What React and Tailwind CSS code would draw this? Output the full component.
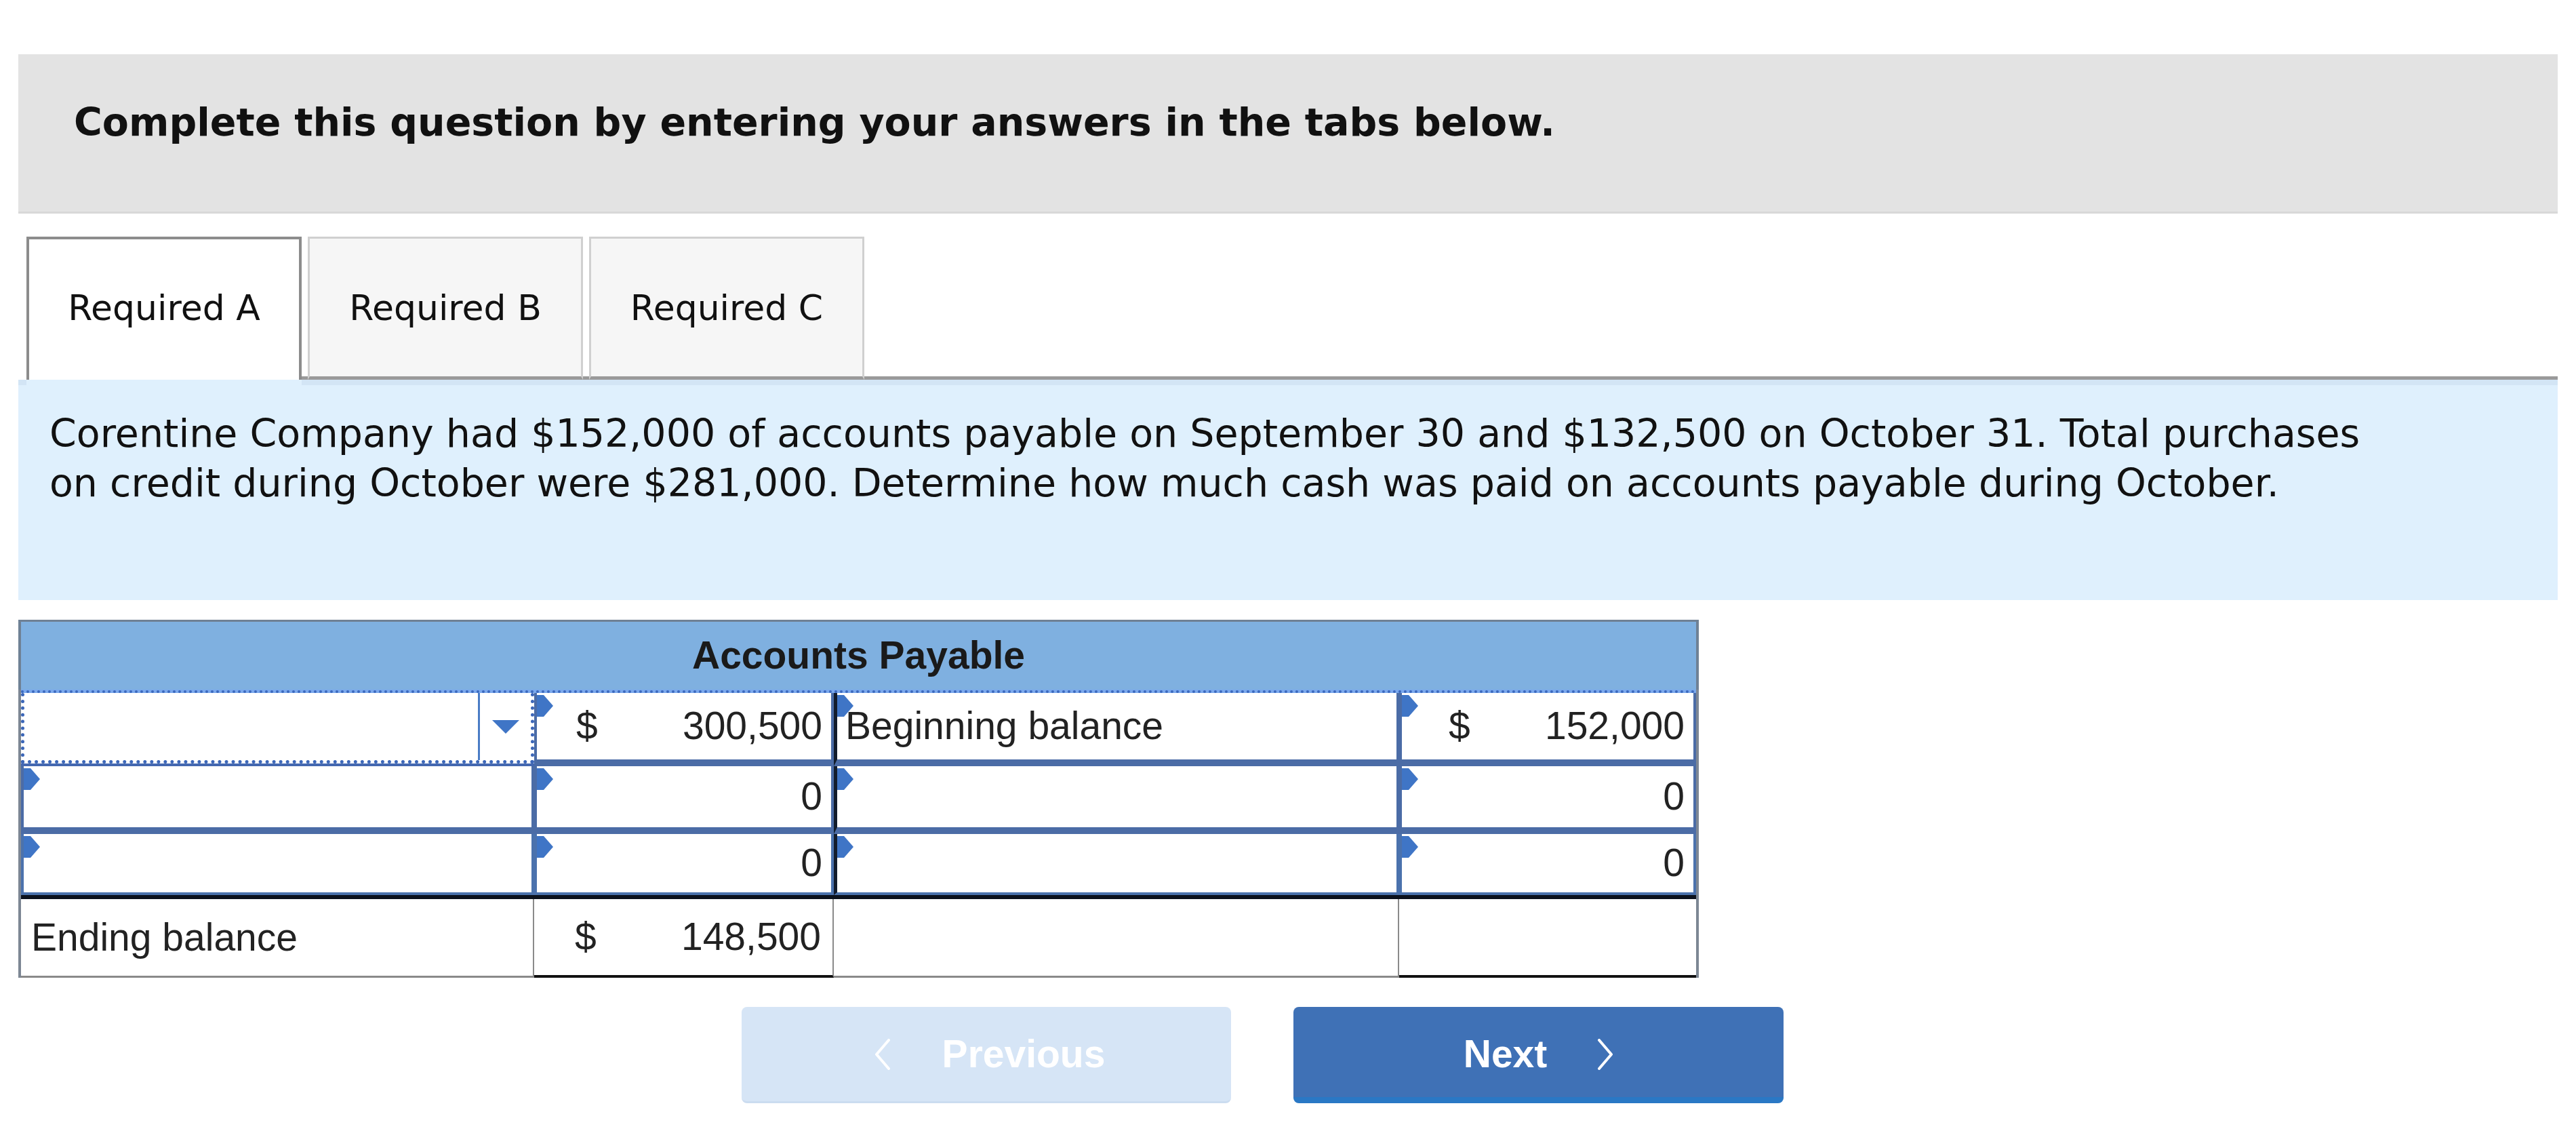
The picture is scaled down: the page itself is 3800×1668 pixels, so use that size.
import React from "react";

const verdana = "font-['DejaVu_Sans',Verdana,sans-serif]";
const arial = "font-['Liberation_Sans',Arial,sans-serif]";

function Flag() {
  return (
    <svg className="absolute left-0 top-[3px]" width="24" height="32" viewBox="0 0 24 32">
      <path d="M0 0H10L24 16L10 32H0Z" fill="#3f75c6" />
    </svg>
  );
}

function Chevron({ dir }) {
  return (
    <svg width="24" height="46" viewBox="0 0 24 46" fill="none">
      <path
        d={dir === "left" ? "M21 2L3 23L21 44" : "M3 2L21 23L3 44"}
        stroke="white"
        strokeWidth="4"
        strokeLinecap="round"
        strokeLinejoin="round"
      />
    </svg>
  );
}

function MoneyCell({ dollar, value, className, dollarPad = "pl-[58px]" }) {
  return (
    <div className={`relative flex items-center bg-white pr-[13px] ${className}`}>
      <Flag />
      <span className={dollarPad}>{dollar ? "$" : ""}</span>
      <span className="ml-auto">{value}</span>
    </div>
  );
}

export default function App() {
  return (
    <div className="w-[3800px] h-[1668px] bg-white pt-[80px] text-[#111]">
      {/* instructions banner */}
      <div
        className={`ml-[27px] w-[3746px] h-[235px] bg-[#e3e3e3] border-b-[3px] border-[#d8d8d8] pl-[82px] pt-[72px] text-[57px] leading-[57px] font-bold ${verdana}`}
      >
        Complete this question by entering your answers in the tabs below.
      </div>

      {/* tabs */}
      <div className={`ml-[27px] mt-[34px] w-[3746px] h-[211px] flex text-[52px] ${verdana}`}>
        <div className="w-[12px]" />
        <div className="w-[406px] h-full bg-white border-t-4 border-x-4 border-[#8c8c8c] flex items-center justify-center pb-[6px]">
          Required A
        </div>
        <div className="w-[9px] border-b-[5px] border-[#9a9a9a]" />
        <div className="w-[406px] h-full bg-[#f6f6f6] border-t-[3px] border-x-[3px] border-[#d0d0d0] border-b-[5px] border-b-[#9a9a9a] flex items-center justify-center">
          Required B
        </div>
        <div className="w-[9px] border-b-[5px] border-[#9a9a9a]" />
        <div className="w-[406px] h-full bg-[#f6f6f6] border-t-[3px] border-x-[3px] border-[#d0d0d0] border-b-[5px] border-b-[#9a9a9a] flex items-center justify-center">
          Required C
        </div>
        <div className="flex-1 border-b-[5px] border-[#9a9a9a]" />
      </div>

      {/* question */}
      <div className={`ml-[27px] w-[3746px] h-[325px] bg-[#dff0fd] ${verdana}`}>
        <div className="flex h-[8px]">
          <div className="w-[12px] bg-[#d3e5f5]" />
          <div className="w-[406px]" />
          <div className="flex-1 bg-[#d3e5f5]" />
        </div>
        <p className="pl-[46px] pt-[35px] text-[57px] leading-[73px] whitespace-nowrap">
          Corentine Company had $152,000 of accounts payable on September 30 and $132,500 on October 31. Total purchases
          <br />
          on credit during October were $281,000. Determine how much cash was paid on accounts payable during October.
        </p>
      </div>

      {/* T-account */}
      <div className={`ml-[27px] mt-[29px] w-[2479px] text-[57px] text-[#222] ${arial}`}>
        <div className="h-[103px] bg-[#7fb0e0] border-t-[3px] border-x-4 border-[#6f8195] flex items-center justify-center font-bold text-[#1a1a1a]">
          Accounts Payable
        </div>
        <div className="border-x-4 border-[#7d8794]">
          <div className="h-[5px] bg-[#7aa8ec] border-b-4 border-dotted border-[#3b69be]" />

          {/* row 1 */}
          <div className="grid grid-cols-[757px_442px_834px_438px] h-[108px]">
            <div className="flex flex-col bg-white">
              <div className="flex-1 flex border-x-[5px] border-b-[5px] border-dotted border-[#3b66b8]">
                <div className="flex-1" />
                <div className="w-[3px] bg-[#4a7cc6]" />
                <div className="w-[75px] flex items-center justify-center">
                  <svg width="40" height="20" viewBox="0 0 40 20">
                    <path d="M0 0H40L20 20Z" fill="#3f75c6" />
                  </svg>
                </div>
              </div>
              <div className="h-[4px] bg-[#4468b0]" />
            </div>
            <MoneyCell dollar value="300,500" className="border-x-4 border-b-[10px] border-[#4b6ca6]" />
            <div className="relative flex items-center bg-white pl-[12px] border-l-[5px] border-r-4 border-b-[10px] border-[#4b6ca6] border-l-[#121c2c]">
              <Flag />
              Beginning balance
            </div>
            <MoneyCell dollar value="152,000" dollarPad="pl-[69px]" className="border-x-4 border-b-[10px] border-[#4b6ca6]" />
          </div>

          {/* row 2 */}
          <div className="grid grid-cols-[757px_442px_834px_438px] h-[100px]">
            <div className="relative bg-white border-x-4 border-b-[10px] border-[#4b6ca6]">
              <Flag />
            </div>
            <MoneyCell value="0" className="border-x-4 border-b-[10px] border-[#4b6ca6]" />
            <div className="relative bg-white border-l-[5px] border-r-4 border-b-[10px] border-[#4b6ca6] border-l-[#121c2c]">
              <Flag />
            </div>
            <MoneyCell value="0" className="border-x-4 border-b-[10px] border-[#4b6ca6]" />
          </div>

          {/* row 3 */}
          <div className="grid grid-cols-[757px_442px_834px_438px] h-[90px]">
            <div className="relative bg-white border-x-4 border-b-4 border-[#4b72ad]">
              <Flag />
            </div>
            <MoneyCell value="0" className="border-x-4 border-b-4 border-[#4b72ad]" />
            <div className="relative bg-white border-l-[5px] border-r-4 border-b-4 border-[#4b72ad] border-l-[#121c2c]">
              <Flag />
            </div>
            <MoneyCell value="0" className="border-x-4 border-b-4 border-[#4b72ad]" />
          </div>
          <div className="h-[6px] bg-[#0b111d]" />

          {/* ending balance */}
          <div className="grid grid-cols-[757px_442px_834px_438px] h-[116px]">
            <div className="flex items-center pl-[15px] border-r-2 border-b-[3px] border-[#8a8a8a]">
              Ending balance
            </div>
            <div className="flex items-center pr-[17px] border-r-2 border-[#8a8a8a] border-b-4 border-b-[#111]">
              <span className="pl-[60px]">$</span>
              <span className="ml-auto">148,500</span>
            </div>
            <div className="border-r-2 border-b-[3px] border-[#8a8a8a]" />
            <div className="border-b-4 border-[#111]" />
          </div>
        </div>
      </div>

      {/* navigation */}
      <div className={`ml-[1094px] mt-[43px] flex gap-[92px] text-[57px] font-bold text-white ${arial}`}>
        <button className="w-[722px] h-[142px] rounded-[8px] bg-[#d6e5f6] border-b-[3px] border-[#cbdcf0] flex items-center justify-center gap-[76px] pl-[10px]">
          <Chevron dir="left" />
          <span>Previous</span>
        </button>
        <button className="w-[723px] h-[142px] rounded-[8px] bg-[#3f71b6] border-b-[9px] border-[#2a78c5] flex items-center justify-center gap-[74px] pt-[6px]">
          <span>Next</span>
          <Chevron dir="right" />
        </button>
      </div>
    </div>
  );
}
